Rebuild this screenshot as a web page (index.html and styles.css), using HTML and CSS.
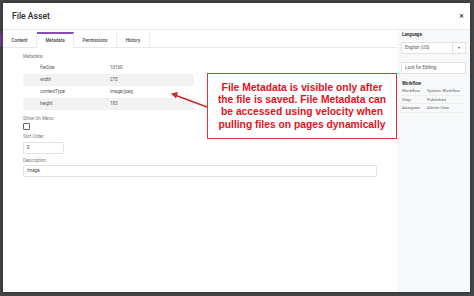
FILE: index.html
```html
<!DOCTYPE html>
<html>
<head>
    <title>File Asset</title>
    <link rel="stylesheet" href="styles.css">
</head>
<body>
    <div class="backdrop-strip"></div>
    <div class="dialog">
        <!-- Dialog header -->
        <div class="dialog-header">
            <h1>File Asset</h1>
            <span class="close">&#x2715;</span>
        </div>

        <div class="dialog-body">
            <!-- Main editing area -->
            <div class="main">
                <div class="tabs">
                    <div class="tab">Content</div>
                    <div class="tab active">Metadata</div>
                    <div class="tab">Permissions</div>
                    <div class="tab">History</div>
                </div>

                <div class="tab-content">
                    <label class="field-label">Metadata:</label>
                    <table class="meta-table">
                        <tr><td>fileSize</td><td>10160</td></tr>
                        <tr><td>width</td><td>275</td></tr>
                        <tr><td>contentType</td><td>image/jpeg</td></tr>
                        <tr><td>height</td><td>183</td></tr>
                    </table>

                    <div class="field field-menu">
                        <label class="field-label">Show On Menu:</label>
                        <span class="checkbox"></span>
                    </div>
                    <div class="field">
                        <label class="field-label">Sort Order:</label>
                        <div class="text-input short">0</div>
                    </div>
                    <div class="field">
                        <label class="field-label">Description:</label>
                        <div class="text-input wide">Image</div>
                    </div>
                </div>
            </div>

            <!-- Sidebar -->
            <div class="sidebar">
                <div class="side-label">Language</div>
                <div class="select">
                    <span class="select-value">English (US)</span>
                    <span class="select-caret">&#9662;</span>
                </div>
                <div class="side-button">Lock for Editing</div>
                <div class="side-label workflow-title">Workflow</div>
                <div class="wf-row"><span class="wf-key">Workflow:</span><span>System Workflow</span></div>
                <div class="wf-row"><span class="wf-key">Step:</span><span>Published</span></div>
                <div class="wf-row"><span class="wf-key">Assignee:</span><span>Admin User</span></div>
            </div>
        </div>

        <!-- Annotation -->
        <svg class="arrow" width="50" height="30" viewBox="0 0 50 30">
            <line x1="40" y1="20" x2="9" y2="8.5" stroke="#c62a2a" stroke-width="1.6"/>
            <polygon points="4,6.5 11,5 9,11.5" fill="#c62a2a"/>
        </svg>
        <div class="callout">
            File Metadata is visible only after<br>
            the file is saved. File Metadata can<br>
            be accessed using velocity when<br>
            pulling files on pages dynamically
        </div>
    </div>
</body>
</html>
```

FILE: styles.css
```css
body {
    margin: 0;
    padding: 3px 4px 4px 3px;
    background-color: #444546;
    font-family: Roboto, "Liberation Sans", Arial, sans-serif;
    color: #555;
    position: relative;
    height: 289px;
}
.backdrop-strip {
    position: absolute;
    left: 0;
    top: 33px;
    width: 3px;
    height: 13px;
    background-color: #6b3a86;
}
.dialog {
    position: relative;
    height: 289px;
    background-color: #ffffff;
    display: flex;
    flex-direction: column;
    box-shadow: 0 0 3px rgba(0, 0, 0, 0.4);
}
.dialog-header {
    height: 26px;
    border-bottom: 1px solid #e8e8e8;
    display: flex;
    align-items: center;
    justify-content: space-between;
    padding: 0 6px 0 9px;
}
.dialog-header h1 {
    margin: 0;
    font-size: 8.6px;
    font-weight: 500;
    color: #2b2b2b;
}
.close {
    font-size: 5.5px;
    font-weight: bold;
    color: #333;
}
.dialog-body {
    flex: 1;
    display: flex;
}
.main {
    flex: 1;
}
.tabs {
    display: flex;
    margin-top: 2px;
    height: 15px;
    border-bottom: 1px solid #e8e8e8;
}
.tab {
    padding: 0 8.5px;
    font-size: 4.5px;
    font-weight: 500;
    color: #444;
    border-right: 1px solid #ececec;
    border-top: 2px solid transparent;
    box-sizing: border-box;
    height: 16px;
    line-height: 13px;
}
.tab.active {
    border-top-color: #8a4cb3;
    background-color: #fff;
}
.tab-content {
    padding: 6px 0 0 20px;
}
.field-label {
    display: block;
    font-size: 4.5px;
    line-height: 6px;
    color: #777;
    margin-bottom: 1.5px;
}
.meta-table {
    border-collapse: collapse;
    width: 171px;
    font-size: 4.5px;
    color: #555;
}
.meta-table td {
    height: 12px;
    padding: 0;
}
.meta-table td:first-child {
    padding-left: 17px;
    width: 70px;
}
.meta-table tr:nth-child(even) {
    background-color: #f2f2f2;
}
.field {
    margin-top: 4px;
}
.field-menu {
    margin-top: 6px;
}
.checkbox {
    display: block;
    width: 5px;
    height: 5px;
    border: 0.8px solid #666;
    border-radius: 1px;
    margin-top: 0.5px;
}
.text-input {
    height: 12px;
    box-sizing: border-box;
    border: 1px solid #e2e2e2;
    border-radius: 1px;
    font-size: 4.5px;
    line-height: 10px;
    padding-left: 3px;
    color: #444;
}
.text-input.short {
    width: 41px;
}
.text-input.wide {
    width: 354px;
}
.sidebar {
    width: 73px;
    background-color: #f7f8f9;
    padding: 2px 4px 0 4px;
    box-sizing: border-box;
}
.side-label {
    font-size: 4.5px;
    font-weight: bold;
    color: #333;
    line-height: 6px;
    padding-left: 1px;
}
.select {
    margin-top: 4px;
    height: 12px;
    background-color: #fff;
    border: 1px solid #e2e2e2;
    box-sizing: border-box;
    display: flex;
    font-size: 4.5px;
    color: #555;
}
.select-value {
    flex: 1;
    padding-left: 3px;
    line-height: 10px;
}
.select-caret {
    width: 12px;
    border-left: 1px solid #e2e2e2;
    text-align: center;
    line-height: 10px;
    font-size: 4px;
}
.side-button {
    margin-top: 8px;
    height: 12px;
    background-color: #fff;
    border: 1px solid #e2e2e2;
    box-sizing: border-box;
    font-size: 4.5px;
    line-height: 10px;
    padding-left: 3px;
    color: #555;
}
.workflow-title {
    margin-top: 7px;
}
.wf-row {
    display: flex;
    font-size: 4.3px;
    color: #666;
    height: 8.5px;
    line-height: 8px;
    padding-left: 1px;
    border-bottom: 1px solid #eceded;
    box-sizing: border-box;
}
.wf-key {
    width: 25px;
}
.arrow {
    position: absolute;
    left: 164px;
    top: 84px;
}
.callout {
    position: absolute;
    left: 204px;
    top: 70px;
    width: 190px;
    height: 66px;
    box-sizing: border-box;
    border: 1px solid #e0343a;
    background-color: #fff;
    color: #e3121d;
    font-family: "Liberation Sans", Arial, sans-serif;
    font-weight: bold;
    font-size: 10.3px;
    line-height: 12.2px;
    text-align: center;
    padding-top: 8px;
    white-space: nowrap;
}
```
